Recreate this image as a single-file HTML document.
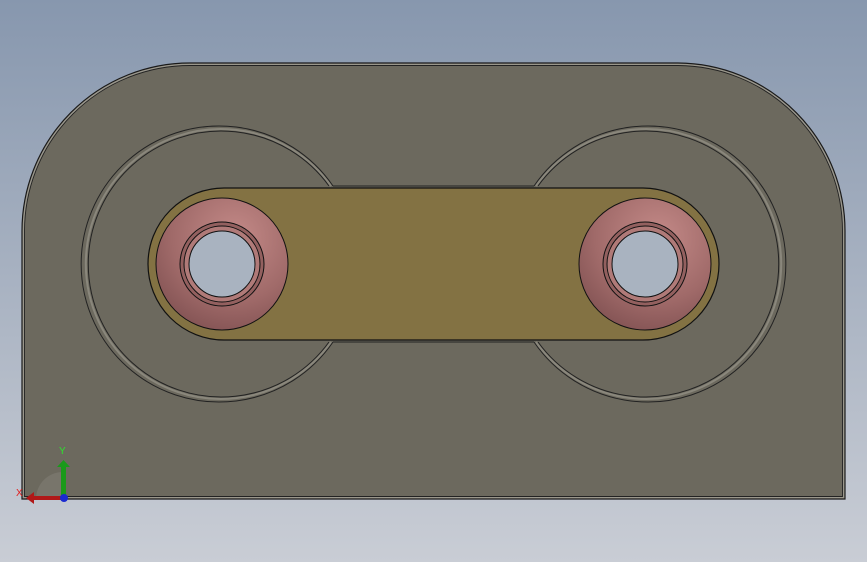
<!DOCTYPE html><html><head><style>body{margin:0}svg{display:block}</style></head><body>
<svg width="867" height="562" viewBox="0 0 867 562" xmlns="http://www.w3.org/2000/svg">
<defs>
<linearGradient id="bg" x1="0" y1="0" x2="0" y2="1"><stop offset="0" stop-color="#8797ae"/><stop offset="1" stop-color="#c9cdd5"/></linearGradient>
<radialGradient id="rg" cx="0.6" cy="0.3" r="0.8"><stop offset="0" stop-color="#c48a88"/><stop offset="0.6" stop-color="#a06a69"/><stop offset="1" stop-color="#7e4f50"/></radialGradient>
</defs>
<rect width="867" height="562" fill="url(#bg)"/>
<path d="M22,499 V232 A168,168 0 0 1 190,63 H678 A168,168 0 0 1 845,232 V499 Z" fill="#9a978c" stroke="#1a1a1a" stroke-width="1.2"/>
<path d="M24.5,496.5 V232 A165.5,165.5 0 0 1 190,65.5 H678 A165.5,165.5 0 0 1 842.5,232 V496.5 Z" fill="#6c695e" stroke="#222" stroke-width="0.9"/>
<g fill="none" stroke="#222" stroke-width="1">
<path d="M333,186 A138,138 0 1 0 333,342"/>
<path d="M331,186 A135,135 0 1 0 331,342" stroke="#8a877c" stroke-width="2"/>
<path d="M329,186 A133,133 0 1 0 329,342"/>
<path d="M534,186 A138,138 0 1 1 534,342"/>
<path d="M536,186 A135,135 0 1 1 536,342" stroke="#8a877c" stroke-width="2"/>
<path d="M538,186 A133,133 0 1 1 538,342"/>
<line x1="333" y1="186" x2="534" y2="186"/><line x1="333" y1="342" x2="534" y2="342"/>
</g>
<path d="M224,188 H643 A76,76 0 0 1 643,340 H224 A76,76 0 0 1 224,188 Z" fill="#837243" stroke="#111" stroke-width="1.2"/>
<g stroke="#111" stroke-width="1">
<circle cx="222" cy="264" r="66" fill="url(#rg)"/>
<circle cx="222" cy="264" r="42" fill="#93605f"/>
<circle cx="222" cy="264" r="38" fill="#b07a78"/>
<circle cx="222" cy="264" r="33" fill="#a9b3c0"/>
<circle cx="645" cy="264" r="66" fill="url(#rg)"/>
<circle cx="645" cy="264" r="42" fill="#93605f"/>
<circle cx="645" cy="264" r="38" fill="#b07a78"/>
<circle cx="645" cy="264" r="33" fill="#a9b3c0"/>
</g>
<path d="M36,499 A27,27 0 0 1 63,472 V499 Z" fill="#807d75" opacity="0.6"/>
<rect x="61" y="465" width="5" height="33" fill="#1a9a1a"/>
<path d="M57,467 L63.5,460 L70,467 Z" fill="#1a9a1a"/>
<rect x="32" y="496" width="31" height="4" fill="#b01818"/>
<path d="M34,492 L26,498 L34,504 Z" fill="#b01818"/>
<circle cx="64" cy="498" r="4" fill="#1a2ad0"/>
<text x="59" y="454" font-family="Liberation Sans,sans-serif" font-size="10" fill="#2ee02e">Y</text>
<text x="16" y="496" font-family="Liberation Sans,sans-serif" font-size="10" fill="#e02020">X</text>
</svg>
</body></html>
